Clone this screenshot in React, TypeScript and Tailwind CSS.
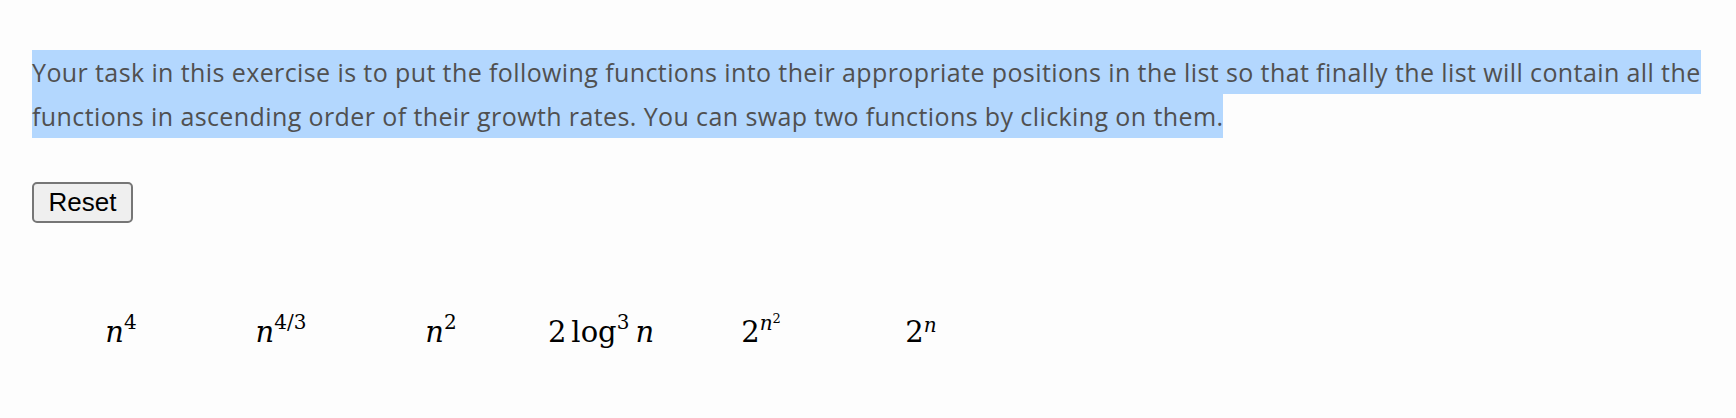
import React from "react";

function Sup({ children, className = "" }: { children: React.ReactNode; className?: string }) {
  return <span className={"text-[20px] leading-none " + className}>{children}</span>;
}

export default function App() {
  return (
    <div className="min-h-[418px] w-full bg-[#fdfdfd] pt-[50px]">
      <p
        className="pl-[32px] text-[25px] leading-[44px] tracking-[0.4px] text-[#505050]"
        style={{ fontFamily: "'Open Sans', 'Noto Sans', sans-serif" }}
      >
        <span className="bg-[#b3d7fe] py-[4.9px] box-decoration-clone">
          Your task in this exercise is to put the following functions into their appropriate positions in the list so that finally the list will contain all the{" "}
          <br />
          functions in ascending order of their growth rates. You can swap two functions by clicking on them.
        </span>
      </p>
      <div className="mt-[44px] pl-[32px]">
        <button
          type="button"
          className="flex h-[41px] w-[101px] items-center justify-center rounded-[5px] border-2 border-[#767676] bg-[#efefef] text-[26px] text-black"
          style={{ fontFamily: "'Liberation Sans', Arial, sans-serif" }}
        >
          Reset
        </button>
      </div>
      <div
        className="mt-[79px] flex pl-[41px] text-[29px] leading-[60px] text-black"
        style={{ fontFamily: "'DejaVu Serif', 'Liberation Serif', serif" }}
      >
        <div className="w-[160px] text-center">
          <i>n</i>
          <Sup className="align-[13px]">4</Sup>
        </div>
        <div className="w-[160px] text-center">
          <i>n</i>
          <Sup className="align-[13px]">4/3</Sup>
        </div>
        <div className="w-[160px] text-center">
          <i>n</i>
          <Sup className="align-[13px]">2</Sup>
        </div>
        <div className="w-[160px] text-center">
          <span>2</span>
          <span className="ml-[5px]">log</span>
          <Sup className="align-[13px]">3</Sup>
          <i className="ml-[6px]">n</i>
        </div>
        <div className="w-[160px] text-center">
          <span>2</span>
          <span className="align-[12px] text-[20px] leading-none">
            <i>n</i>
            <span className="align-[7px] text-[13px] leading-none">2</span>
          </span>
        </div>
        <div className="w-[160px] text-center">
          <span>2</span>
          <Sup className="align-[10px]">
            <i>n</i>
          </Sup>
        </div>
      </div>
    </div>
  );
}
